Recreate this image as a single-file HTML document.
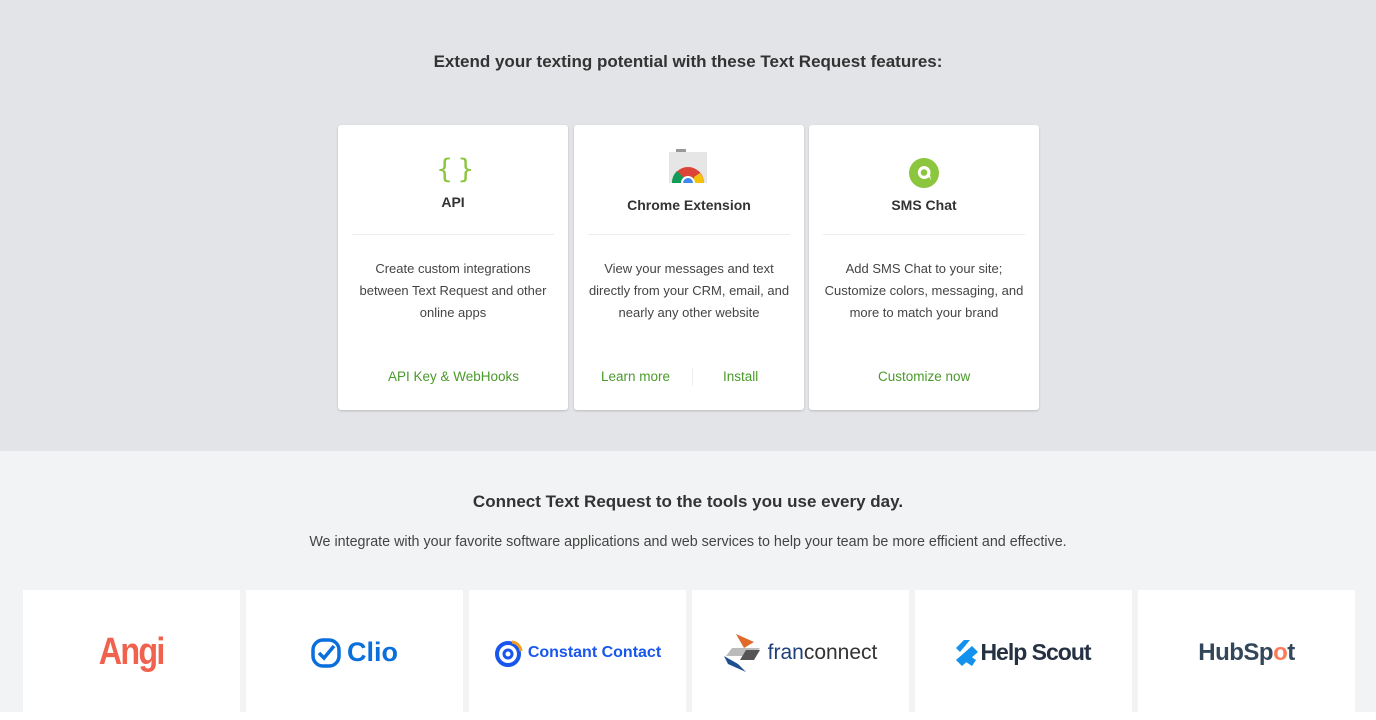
<!DOCTYPE html>
<html><head><meta charset="utf-8"><style>
*{margin:0;padding:0;box-sizing:border-box}
body{width:1376px;height:712px;overflow:hidden;font-family:"Liberation Sans",sans-serif;color:#333}
.top{position:absolute;left:0;top:0;width:1376px;height:451px;background:#e3e4e7}
.bot{position:absolute;left:0;top:451px;width:1376px;height:261px;background:#f2f3f4}
h2{position:absolute;width:1376px;text-align:center;font-size:17px;font-weight:bold;color:#333}
.card{position:absolute;top:125px;width:230px;height:285px;background:#fff;border-radius:3px;box-shadow:0 1px 2px rgba(0,0,0,.18)}
.card .t{position:absolute;width:100%;text-align:center;font-size:14px;font-weight:bold;color:#333}
.card .hr{position:absolute;left:14px;right:14px;top:109px;height:1px;background:#ececec}
.card .d{position:absolute;top:133px;left:14px;right:14px;text-align:center;font-size:13px;line-height:22px;color:#444}
.card .l{position:absolute;top:244px;font-size:13.5px;color:#4a9a2a}
.ic{position:absolute}
.lg{position:absolute;top:590px;width:217px;height:130px;background:#fff}
.lg .c{position:absolute;top:40px;left:0;width:100%;height:45px;display:flex;align-items:center;justify-content:center}
</style></head><body>
<div class="top"></div><div class="bot"></div>
<h2 style="top:52px">Extend your texting potential with these Text Request features:</h2>

<div class="card" style="left:338px">
 <div class="ic" style="left:98px;top:29px;font-size:27px;color:#8cc63f;font-family:'DejaVu Sans',sans-serif;letter-spacing:4px">{}</div>
 <div class="t" style="top:69px">API</div>
 <div class="hr"></div>
 <div class="d">Create custom integrations between Text Request and other online apps</div>
 <div class="l" style="left:50px">API Key &amp; WebHooks</div>
</div>

<div class="card" style="left:574px">
 <svg class="ic" style="left:95px;top:24px" width="38" height="34" viewBox="0 0 38 34">
  <rect x="7" y="0" width="10" height="3" fill="#999"/>
  <rect x="0" y="3" width="38" height="31" fill="#e6e6e6"/>
  <path d="M3 34 A16 16 0 0 1 35 34 Z" fill="#db4437"/>
  <path d="M3 34 A16 16 0 0 1 8 22 L16 30 L14 34Z" fill="#0f9d58"/>
  <path d="M25 28 L31 24 A16 16 0 0 1 35 34 L25 34Z" fill="#f4c20d"/>
  <circle cx="19" cy="34" r="7" fill="#fff"/><circle cx="19" cy="34" r="5" fill="#4285f4"/>
 </svg>
 <div class="t" style="top:72px">Chrome Extension</div>
 <div class="hr"></div>
 <div class="d">View your messages and text directly from your CRM, email, and nearly any other website</div>
 <div class="l" style="left:27px">Learn more</div>
 <div style="position:absolute;left:118px;top:243px;width:1px;height:18px;background:#eee"></div>
 <div class="l" style="left:149px">Install</div>
</div>

<div class="card" style="left:809px">
 <svg class="ic" style="left:100px;top:33px" width="30" height="30" viewBox="0 0 30 30">
  <circle cx="15" cy="15" r="15" fill="#8cc63f"/>
  <path d="M15 8 A6.5 6.5 0 1 0 20 19 L22 22 L21 17 A6.5 6.5 0 0 0 15 8Z" fill="#fff"/>
  <circle cx="15" cy="14.5" r="3.3" fill="#8cc63f"/>
 </svg>
 <div class="t" style="top:72px">SMS Chat</div>
 <div class="hr"></div>
 <div class="d">Add SMS Chat to your site; Customize colors, messaging, and more to match your brand</div>
 <div class="l" style="left:69px">Customize now</div>
</div>

<h2 style="top:492px">Connect Text Request to the tools you use every day.</h2>
<div style="position:absolute;top:534px;width:1376px;text-align:center;font-size:14.3px;color:#444">We integrate with your favorite software applications and web services to help your team be more efficient and effective.</div>

<div class="lg" style="left:23px"><div class="c"><span style="font-size:38px;font-weight:bold;color:#f0624d;letter-spacing:-2px;display:inline-block;transform:scaleX(0.85)">Angi</span></div></div>
<div class="lg" style="left:246px"><div class="c">
 <svg width="30" height="30" viewBox="0 0 30 30"><rect x="2" y="2" width="26" height="26" rx="10" fill="none" stroke="#0a6fdc" stroke-width="3.5"/><path d="M8 15 L13 20 L23 8" fill="none" stroke="#0a6fdc" stroke-width="3.5"/></svg>
 <span style="font-size:27px;font-weight:bold;color:#0a6fdc;margin-left:6px">Clio</span></div></div>
<div class="lg" style="left:469px"><div class="c">
 <svg width="30" height="30" viewBox="0 0 30 30"><circle cx="14" cy="16" r="11" fill="none" stroke="#1856ed" stroke-width="4"/><circle cx="14" cy="16" r="4" fill="none" stroke="#1856ed" stroke-width="3"/><path d="M18 4 A10 10 0 0 1 27 13" fill="none" stroke="#f29f1e" stroke-width="3"/></svg>
 <span style="font-size:16px;font-weight:bold;color:#1856ed;margin-left:4px">Constant Contact</span></div></div>
<div class="lg" style="left:692px"><div class="c">
 <svg width="42" height="38" viewBox="0 0 42 38"><path d="M12 0 L30 8 L20 14 Z" fill="#e06a2a"/><path d="M8 14 L36 14 L30 22 L2 22Z" fill="#bbb"/><path d="M22 16 L36 16 L30 26 L16 26Z" fill="#555"/><path d="M0 22 L14 30 L22 38 L4 30Z" fill="#1d4e8f"/></svg>
 <span style="font-size:21px;color:#1d3f7a;margin-left:2px">fran<span style="color:#333">connect</span></span></div></div>
<div class="lg" style="left:915px"><div class="c">
 <svg width="22" height="26" viewBox="0 0 22 26"><path d="M8 0 L14 0 L4 12 L0 8Z M16 6 L22 12 L6 26 L0 20Z M14 16 L20 20 L16 26 L10 22Z" fill="#1292ee"/></svg>
 <span style="font-size:23px;font-weight:bold;color:#253143;margin-left:2px;letter-spacing:-1px">Help Scout</span></div></div>
<div class="lg" style="left:1138px"><div class="c"><span style="font-size:24px;font-weight:bold;color:#33475b;letter-spacing:-0.5px">HubSp<span style="color:#ff7a59">o</span>t</span></div></div>
</body></html>
